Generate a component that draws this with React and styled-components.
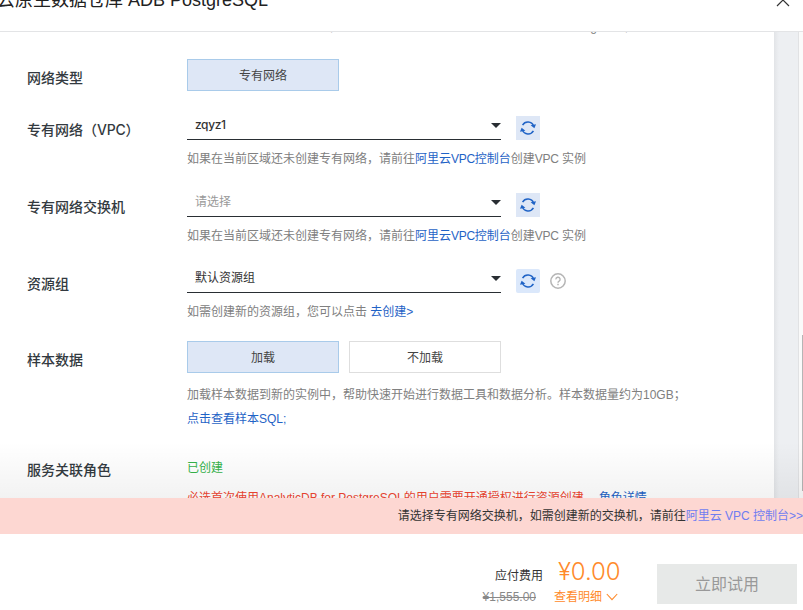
import React from "react";
import styled, { createGlobalStyle } from "styled-components";

const RefreshIcon = () => (
  <svg width="18" height="16" viewBox="0 0 18 16" fill="none">
    <path d="M3.6 5.2A6.1 6.1 0 0 1 14.6 6" stroke="#1f63c6" strokeWidth="1.5" />
    <path d="M14.4 10.8A6.1 6.1 0 0 1 3.4 10" stroke="#1f63c6" strokeWidth="1.5" />
    <path d="M11.6 5.2l5.4-.9-1.6 4z" fill="#1f63c6" />
    <path d="M6.4 10.8l-5.4.9 1.6-4z" fill="#1f63c6" />
  </svg>
);

const HelpIcon = () => (
  <svg width="16" height="16" viewBox="0 0 16 16" fill="none" stroke="#b5b5b5">
    <circle cx="8" cy="8" r="7.2" strokeWidth="1.5" />
    <path d="M5.9 6.4a2.1 2.1 0 1 1 3.2 1.7c-.7.4-1.1.8-1.1 1.6" strokeWidth="1.4" />
    <path d="M8 10.8v1.4" strokeWidth="1.5" />
  </svg>
);

const Select = ({ value, latin, placeholder }) => (
  <SelectBox>
    <SelectValue $latin={latin} $empty={!value}>{value || placeholder}</SelectValue>
    <Caret />
  </SelectBox>
);

const VpcHint = () => (
  <Hint>
    如果在当前区域还未创建专有网络，请前往<Link href="#">阿里云<Tight>VPC</Tight>控制台</Link>创建<Tight>VPC</Tight> 实例
  </Hint>
);

const App = () => {
  return (
    <Page>
      <GlobalStyle />
      <Header>
        <Title>云原生数据仓库 ADB PostgreSQL</Title>
        <CloseButton>
          <svg width="14" height="14" viewBox="0 0 14 14" stroke="#333" strokeWidth="1.2">
            <path d="M1 1l12 12M13 1L1 13" />
          </svg>
        </CloseButton>
      </Header>

      <Body>
        <Form>
          <Row $height={52} $labelTop={36}>
            <Label>网络类型</Label>
            <Field $top={27}>
              <Options>
                <Option $active>专有网络</Option>
              </Options>
            </Field>
          </Row>

          <Row $height={77} $labelTop={36}>
            <Label>专有网络（<LabelLatin>VPC</LabelLatin>）</Label>
            <Field $top={28}>
              <Control>
                <Select value="zqyz1" latin />
                <RefreshButton><RefreshIcon /></RefreshButton>
              </Control>
              <VpcHint />
            </Field>
          </Row>

          <Row $height={76} $labelTop={36}>
            <Label>专有网络交换机</Label>
            <Field $top={28}>
              <Control>
                <Select placeholder="请选择" />
                <RefreshButton><RefreshIcon /></RefreshButton>
              </Control>
              <VpcHint />
            </Field>
          </Row>

          <Row $height={77} $labelTop={37}>
            <Label>资源组</Label>
            <Field $top={28}>
              <Control>
                <Select value="默认资源组" />
                <RefreshButton $round><RefreshIcon /></RefreshButton>
                <Help><HelpIcon /></Help>
              </Control>
              <Hint>
                如需创建新的资源组，您可以点击 <Link href="#">去创建&gt;</Link>
              </Hint>
            </Field>
          </Row>

          <Row $height={110} $labelTop={36}>
            <Label>样本数据</Label>
            <Field $top={27}>
              <Options>
                <Option $active>加载</Option>
                <Option>不加载</Option>
              </Options>
              <SampleHint>
                加载样本数据到新的实例中，帮助快速开始进行数据工具和数据分析。样本数据量约为10GB；
                <br />
                <Link href="#">点击查看样本SQL;</Link>
              </SampleHint>
            </Field>
          </Row>

          <Row $height={74} $labelTop={36}>
            <Label>服务关联角色</Label>
            <Field $top={34}>
              <Status>已创建</Status>
              <Warning>
                必选首次使用AnalyticDB for PostgreSQL的用户需要开通授权进行资源创建
                <RoleLink href="#">角色详情</RoleLink>
              </Warning>
            </Field>
          </Row>
        </Form>
        <Gutter />
        <Track>
          <Thumb />
        </Track>
        <Fade />
        <ClippedText>
          <span>,</span>
          <span>g</span>
          <span>,</span>
        </ClippedText>
      </Body>

      <Notice>
        请选择专有网络交换机，如需创建新的交换机，请前往
        <NoticeLink href="#">阿里云 VPC 控制台&gt;&gt;</NoticeLink>
      </Notice>

      <Footer>
        <Prices>
          <PriceLabel>应付费用</PriceLabel>
          <Price>¥0.00</Price>
          <OldPrice>¥1,555.00</OldPrice>
          <Details>
            查看明细
            <svg width="12" height="8" viewBox="0 0 12 8" fill="none" stroke="#ff8a2b" strokeWidth="1.1">
              <path d="M.8 1L6 6.6 11.2 1" />
            </svg>
          </Details>
        </Prices>
        <SubmitButton>立即试用</SubmitButton>
      </Footer>
    </Page>
  );
};

export default App;

// Styled Components
const GlobalStyle = createGlobalStyle`
  * {
    box-sizing: border-box;
  }

  body {
    margin: 0;
    background: white;
    font-family: "Liberation Sans", "Noto Sans CJK SC", sans-serif;
    font-size: 12px;
    color: #333;
  }
`;

const Page = styled.div`
  display: flex;
  flex-direction: column;
  width: 803px;
  height: 610px;
  overflow: hidden;
`;

const Header = styled.header`
  display: flex;
  justify-content: space-between;
  height: 32px;
  flex-shrink: 0;
  border-bottom: 1px solid #e3e4e6;
`;

const Title = styled.h1`
  margin: -12px 0 0 -3px;
  font-size: 18px;
  font-weight: 400;
  line-height: 24px;
  color: #222;
  white-space: nowrap;
`;

const CloseButton = styled.button`
  width: 14px;
  height: 14px;
  margin: -7px 13px 0 0;
  padding: 0;
  border: none;
  background: none;

  svg {
    display: block;
  }
`;

const Body = styled.main`
  position: relative;
  display: flex;
  height: 466px;
  flex-shrink: 0;
  overflow: hidden;
`;

const Form = styled.div`
  width: 774px;
`;

const Row = styled.div`
  display: flex;
  height: ${(props) => props.$height}px;

  > label {
    margin-top: ${(props) => props.$labelTop}px;
  }
`;

const Label = styled.label`
  width: 160px;
  height: 20px;
  margin-left: 27px;
  flex-shrink: 0;
  font-size: 14px;
  font-weight: 500;
  line-height: 20px;
  color: #333a40;
`;

const LabelLatin = styled.span`
  font-family: Inter, sans-serif;
  line-height: 1;
  letter-spacing: -0.2px;
`;

const Field = styled.div`
  padding-top: ${(props) => props.$top}px;
  white-space: nowrap;
`;

const Options = styled.div`
  display: flex;
  gap: 10px;
`;

const Option = styled.button`
  width: 152px;
  height: 32px;
  padding: 0 0 2px;
  border: 1px solid ${(props) => (props.$active ? "#a9cbea" : "#dedede")};
  background: ${(props) => (props.$active ? "#dee7f6" : "white")};
  font: inherit;
  color: #444;
`;

const Control = styled.div`
  display: flex;
  height: 28px;
`;

const SelectBox = styled.div`
  display: flex;
  justify-content: space-between;
  align-items: center;
  width: 314px;
  height: 28px;
  padding: 0 0 0 8px;
  border-bottom: 1px solid #292e33;
`;

const SelectValue = styled.span`
  font-family: ${(props) => (props.$latin ? "Inter, " : "")}"Liberation Sans", "Noto Sans CJK SC", sans-serif;
  font-weight: ${(props) => (props.$latin ? 500 : 400)};
  letter-spacing: ${(props) => (props.$latin ? "-0.4px" : "normal")};
  line-height: 20px;
  margin-top: -1px;
  color: ${(props) => (props.$empty ? "#999" : "#333")};
`;

const Caret = styled.i`
  border: 5px solid transparent;
  border-top-color: #292e33;
  border-bottom: none;
`;

const RefreshButton = styled.button`
  display: flex;
  align-items: center;
  justify-content: center;
  width: 24px;
  height: 24px;
  margin: 4px 0 0 15px;
  padding: 0;
  border: none;
  border-radius: ${(props) => (props.$round ? 2 : 0)}px;
  background: ${(props) => (props.$round ? "#dbe8fb" : "#dee7f6")};
`;

const Help = styled.span`
  height: 16px;
  margin: 8px 0 0 10px;
`;

const Hint = styled.div`
  margin-top: 9px;
  line-height: 20px;
  color: #808080;
`;

const SampleHint = styled(Hint)`
  margin-top: 10px;
  line-height: 24px;
`;

const Tight = styled.span`
  letter-spacing: -0.3px;
`;

const Link = styled.a`
  color: #1f63c6;
  text-decoration: none;
`;

const Status = styled.div`
  line-height: 20px;
  color: #35b34a;
`;

const Warning = styled.div`
  margin-top: 10px;
  line-height: 20px;
  color: #f04631;
`;

const RoleLink = styled(Link)`
  margin-left: 15px;
`;

const Gutter = styled.div`
  width: 24px;
  background: linear-gradient(90deg, #e2e4e7, #edeff2 5px);
`;

const Track = styled.div`
  display: flex;
  justify-content: flex-end;
  width: 5px;
  border-left: 1px solid #e1e2e4;
  background: #fafafa;
`;

const Thumb = styled.div`
  width: 1px;
  height: 156px;
  margin-top: 303px;
  background: #b5b5b5;
`;

const Fade = styled.div`
  position: absolute;
  left: 0;
  right: 0;
  bottom: 0;
  height: 56px;
  background: linear-gradient(rgba(0, 0, 0, 0), rgba(0, 0, 0, 0.05));
`;

// bottom edge of the line scrolled under the header
const ClippedText = styled.div`
  position: absolute;
  top: -12px;
  left: 330px;
  display: flex;
  justify-content: space-between;
  width: 298px;
  line-height: 14px;
  color: #808080;

  span:nth-child(2) {
    margin-left: 229px;
  }
`;

const Notice = styled.div`
  height: 36px;
  flex-shrink: 0;
  line-height: 37px;
  text-align: right;
  white-space: nowrap;
  background: #fdd7d2;
`;

const NoticeLink = styled.a`
  color: #6f7df0;
  text-decoration: none;
`;

const Footer = styled.footer`
  display: flex;
  justify-content: flex-end;
  height: 76px;
  padding: 0 6px 0 0;
  background: white;
`;

const Prices = styled.div`
  display: grid;
  grid-template-columns: auto 89px;
  grid-template-rows: 27px 20px;
  align-content: start;
  justify-items: end;
  padding-top: 26px;
  margin-right: 14px;
`;

const PriceLabel = styled.span`
  margin-right: 11px;
  line-height: 32px;
`;

const Price = styled.span`
  justify-self: start;
  margin: -3px 0 0 4px;
  font-family: Inter, sans-serif;
  font-size: 24px;
  font-weight: 350;
  letter-spacing: -0.1px;
  line-height: 30px;
  color: #ff8a2b;
`;

const OldPrice = styled.del`
  margin-right: 18px;
  line-height: 20px;
  color: #888;
`;

const Details = styled.a`
  display: flex;
  align-items: center;
  justify-self: start;
  gap: 4px;
  line-height: 20px;
  color: #ff8a2b;
`;

const SubmitButton = styled.button`
  width: 140px;
  height: 40px;
  margin-top: 30px;
  padding: 0 0 2px;
  border: none;
  background: #e7e9e8;
  font-family: inherit;
  font-size: 16px;
  color: #999;
`;
